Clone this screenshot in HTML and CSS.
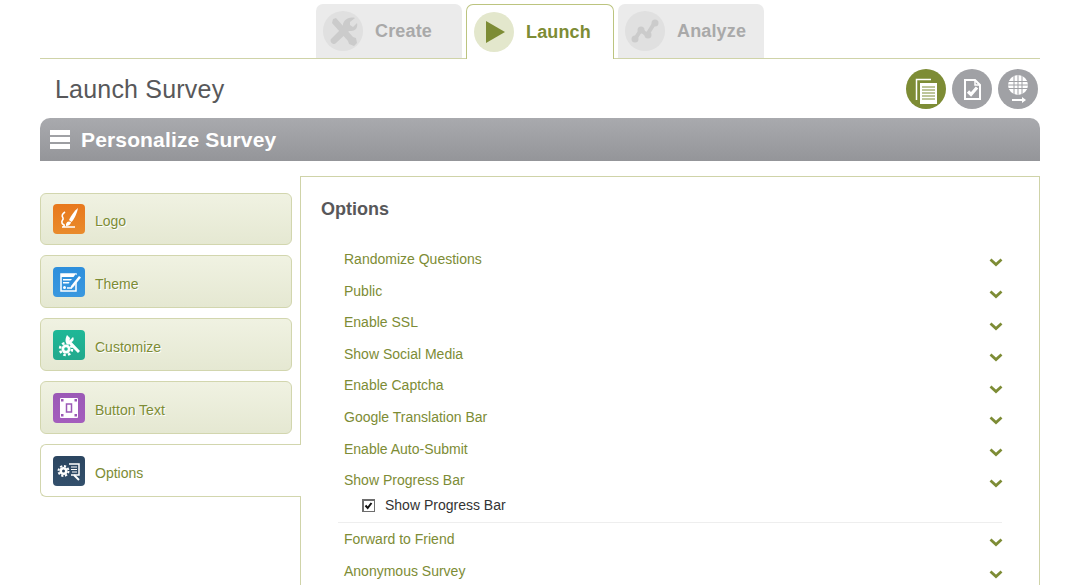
FILE: index.html
```html
<!DOCTYPE html>
<html lang="en">
<head>
<meta charset="utf-8">
<title>Launch Survey</title>
<link rel="stylesheet" href="styles.css">
</head>
<body>
<div class="page">
  <nav class="tabs">
    <div class="tab">
      <span class="tab-icon">
        <svg viewBox="0 0 40 40" width="40" height="40"><g fill="#cbcbcb"><path d="M10 8l3-1 17 19 3 1 1 5-3 3-5-2-1-3L9 12z"/><path d="M32 7l-5 4 0 3 3 2 4-4c1 4-1 8-6 8l-2 0L13 32c-2 3-7-1-5-4l12-12c-1-6 5-11 12-9z"/></g></svg>
      </span>
      <span class="tab-label">Create</span>
    </div>
    <div class="tab tab-active">
      <span class="tab-icon">
        <svg viewBox="0 0 40 40" width="40" height="40"><path d="M12 9v22l19-11z" fill="#7d8c35"/></svg>
      </span>
      <span class="tab-label">Launch</span>
    </div>
    <div class="tab">
      <span class="tab-icon">
        <svg viewBox="0 0 40 40" width="40" height="40"><path d="M10 28l6-9 6 5 8-13" fill="none" stroke="#cbcbcb" stroke-width="4"/><g fill="#cbcbcb"><circle cx="10" cy="28" r="3.500"/><circle cx="16" cy="19" r="3.500"/><circle cx="23" cy="24" r="3.500"/><circle cx="30" cy="12" r="3.500"/></g></svg>
      </span>
      <span class="tab-label">Analyze</span>
    </div>
  </nav>

  <header class="page-head">
    <h1 class="page-title">Launch Survey</h1>
    <div class="head-actions">
      <span class="round round-on">
        <svg viewBox="0 0 40 40" width="40" height="40"><path d="M10.500 31V10.500H25" fill="none" stroke="#fff" stroke-width="1.500"/><path d="M14 14h17v21H14z" fill="#fff"/><path d="M16 18h13M16 21h13M16 24h13M16 27h13M16 30h13" stroke="#7d8c35" stroke-width="1"/></svg>
      </span>
      <span class="round">
        <svg viewBox="0 0 40 40" width="40" height="40"><path d="M13 11h10l5 5v14H13z" fill="none" stroke="#fff" stroke-width="2"/><path d="M23 11v5h5" fill="none" stroke="#fff" stroke-width="1.500"/><path d="M16 22.500l3 3 6-7" fill="none" stroke="#fff" stroke-width="3.200"/></svg>
      </span>
      <span class="round">
        <svg viewBox="0 0 40 40" width="40" height="40"><circle cx="20" cy="16" r="10" fill="#fff"/><path d="M10 12.500h20M10 16h20M10 19.500h20M16 6v20M20 6v20M24 6v20" stroke="#a0a1a5" stroke-width="1"/><path d="M14 31h11" stroke="#fff" stroke-width="2"/><path d="M24 28l4 3-4 3z" fill="#fff"/></svg>
      </span>
    </div>
  </header>

  <div class="section-bar">
    <span class="bars"><i></i><i></i><i></i></span>
    <h2 class="section-title">Personalize Survey</h2>
  </div>

  <div class="content">
    <aside class="side">
      <a class="side-item">
        <span class="side-icon ic-orange">
          <svg viewBox="0 0 32 30" width="32" height="30"><path d="M25 4c-4 3-7 8-9 12l2.500 2c3-3 5.500-9 6.500-14z" fill="#fff"/><path d="M12 8c-3 2-3.500 4-2 6 1 2-2 2-1 5 .5 2 3 1 2 3-.5 1-2 1-2 1h13" fill="none" stroke="#fff" stroke-width="1.600"/><path d="M13 20c1-3 3-3 5-2 0 2-2 4-5 4z" fill="#fff"/></svg>
        </span>
        <span class="side-label">Logo</span>
      </a>
      <a class="side-item">
        <span class="side-icon ic-blue">
          <svg viewBox="0 0 32 30" width="32" height="30"><rect x="8" y="7" width="15" height="17" fill="none" stroke="#fff" stroke-width="1.500"/><path d="M8 7h15v3H8zM10 12h10v1.500H10zM10 15h8v1.500H10z" fill="#fff"/><circle cx="11.500" cy="20.500" r="1.500" fill="#fff"/><path d="M14 21h5" stroke="#fff" stroke-width="1.500"/><path d="M25 9l-7 9" stroke="#2e8fdc" stroke-width="6"/><path d="M26 9l-8 10-.5 2.500 2.500-1 8-10z" fill="#fff"/></svg>
        </span>
        <span class="side-label">Theme</span>
      </a>
      <a class="side-item">
        <span class="side-icon ic-teal">
          <svg viewBox="0 0 32 30" width="32" height="30"><path d="M14 5l3 3-.5 2.500L20 7c1.500 2 .5 4.500-1.500 5L27 21l-2 2-9-9c-3 .5-5-3-2-9z" fill="#fff"/><circle cx="13" cy="19" r="6" fill="none" stroke="#fff" stroke-width="2.500" stroke-dasharray="2.500 2.200"/><circle cx="13" cy="19" r="4.500" fill="#fff"/><circle cx="13" cy="19" r="1.800" fill="#1fb897"/></svg>
        </span>
        <span class="side-label">Customize</span>
      </a>
      <a class="side-item">
        <span class="side-icon ic-purple">
          <svg viewBox="0 0 32 30" width="32" height="30"><rect x="7" y="5" width="18" height="20" rx="1" fill="#fff"/><rect x="13.500" y="11" width="5" height="8" fill="none" stroke="#9b59b6" stroke-width="1.500"/><g fill="#9b59b6"><rect x="8" y="6" width="2.500" height="2.500"/><rect x="21.500" y="6" width="2.500" height="2.500"/><rect x="8" y="21" width="2.500" height="2.500"/><rect x="21.500" y="21" width="2.500" height="2.500"/></g></svg>
        </span>
        <span class="side-label">Button Text</span>
      </a>
      <a class="side-item side-active">
        <span class="side-icon ic-navy">
          <svg viewBox="0 0 32 30" width="32" height="30"><circle cx="10.500" cy="15" r="5" fill="none" stroke="#fff" stroke-width="2" stroke-dasharray="2.200 1.700"/><circle cx="10.500" cy="15" r="4" fill="#fff"/><circle cx="10.500" cy="15" r="1.500" fill="#2b4560"/><path d="M16 8h10v11h-8" fill="none" stroke="#fff" stroke-width="1.500"/><path d="M18 11h6M18 13.500h6M19 16h5" stroke="#fff" stroke-width="1"/><path d="M21 19l5 5" stroke="#fff" stroke-width="2"/></svg>
        </span>
        <span class="side-label">Options</span>
      </a>
    </aside>

    <main class="panel">
      <h3 class="panel-title">Options</h3>
      <ul class="opts">
        <li class="opt"><span>Randomize Questions</span><svg class="chev" viewBox="0 0 14 9" width="14" height="9"><path d="M1.500 1.500L7 6.500l5.500-5" fill="none" stroke="#7d8c35" stroke-width="2.800"/></svg></li>
        <li class="opt"><span>Public</span><svg class="chev" viewBox="0 0 14 9" width="14" height="9"><path d="M1.500 1.500L7 6.500l5.500-5" fill="none" stroke="#7d8c35" stroke-width="2.800"/></svg></li>
        <li class="opt"><span>Enable SSL</span><svg class="chev" viewBox="0 0 14 9" width="14" height="9"><path d="M1.500 1.500L7 6.500l5.500-5" fill="none" stroke="#7d8c35" stroke-width="2.800"/></svg></li>
        <li class="opt"><span>Show Social Media</span><svg class="chev" viewBox="0 0 14 9" width="14" height="9"><path d="M1.500 1.500L7 6.500l5.500-5" fill="none" stroke="#7d8c35" stroke-width="2.800"/></svg></li>
        <li class="opt"><span>Enable Captcha</span><svg class="chev" viewBox="0 0 14 9" width="14" height="9"><path d="M1.500 1.500L7 6.500l5.500-5" fill="none" stroke="#7d8c35" stroke-width="2.800"/></svg></li>
        <li class="opt"><span>Google Translation Bar</span><svg class="chev" viewBox="0 0 14 9" width="14" height="9"><path d="M1.500 1.500L7 6.500l5.500-5" fill="none" stroke="#7d8c35" stroke-width="2.800"/></svg></li>
        <li class="opt"><span>Enable Auto-Submit</span><svg class="chev" viewBox="0 0 14 9" width="14" height="9"><path d="M1.500 1.500L7 6.500l5.500-5" fill="none" stroke="#7d8c35" stroke-width="2.800"/></svg></li>
        <li class="opt"><span>Show Progress Bar</span><svg class="chev" viewBox="0 0 14 9" width="14" height="9"><path d="M1.500 1.500L7 6.500l5.500-5" fill="none" stroke="#7d8c35" stroke-width="2.800"/></svg></li>
        <li class="opt-detail">
          <svg class="check" viewBox="0 0 13 13" width="13" height="13"><rect width="13" height="13" fill="#6d6d6d"/><rect x="2" y="2" width="10" height="10" fill="#fff"/><path d="M3.500 6.500l2.200 2.500 3.800-5" fill="none" stroke="#111" stroke-width="2"/></svg>
          <span>Show Progress Bar</span>
        </li>
        <li class="opt"><span>Forward to Friend</span><svg class="chev" viewBox="0 0 14 9" width="14" height="9"><path d="M1.500 1.500L7 6.500l5.500-5" fill="none" stroke="#7d8c35" stroke-width="2.800"/></svg></li>
        <li class="opt"><span>Anonymous Survey</span><svg class="chev" viewBox="0 0 14 9" width="14" height="9"><path d="M1.500 1.500L7 6.500l5.500-5" fill="none" stroke="#7d8c35" stroke-width="2.800"/></svg></li>
      </ul>
    </main>
  </div>
</div>
</body>
</html>
```
FILE: styles.css
```css
* { box-sizing: border-box; }
html, body { margin: 0; padding: 0; height: 585px; overflow: hidden; background: #fff; }
body { font-family: "Liberation Sans", Arial, sans-serif; }
.page { width: 1000px; margin-left: 40px; height: 585px; overflow: hidden; }

.tabs {
  display: flex; justify-content: center; gap: 4px;
  height: 59px; padding-top: 4px;
  border-bottom: 1px solid #cfd3a8;
}
.tab {
  width: 146px; height: 54px;
  display: flex; align-items: center; gap: 12px;
  padding: 0 0 0 7px;
  background: #ebebeb; border-radius: 7px 7px 0 0;
}
.tab-icon {
  width: 40px; height: 40px; border-radius: 50%;
  background: #e0e0e0; flex: none; display: block;
}
.tab-icon svg { display: block; }
.tab-label { font-size: 18px; font-weight: bold; color: #a9a9a9; letter-spacing: .15px; }
.tab-active {
  width: 148px; height: 55px; background: #fff;
  border: 1px solid #bcc47f; border-bottom: none;
  padding-left: 7px; margin-bottom: -1px; gap: 12px;
}
.tab-active .tab-icon { background: #e3e7cc; }
.tab-active .tab-label { color: #7d8c35; }

.page-head {
  height: 59px; padding: 10px 2px 0 15px;
  display: flex; justify-content: space-between; align-items: flex-start;
}
.page-title { margin: 3px 0 0; font-size: 25px; font-weight: normal; color: #58585a; line-height: 34px; letter-spacing: .2px; }
.head-actions { display: flex; gap: 6px; }
.round { width: 40px; height: 40px; border-radius: 50%; background: #a0a1a5; display: block; }
.round svg { display: block; }
.round-on { background: #7d8c35; }

.section-bar {
  height: 43px; padding-left: 10px;
  display: flex; align-items: center; gap: 11px;
  background: linear-gradient(#a9aaae, #949599);
  border-radius: 10px 10px 0 0;
}
.bars { display: flex; flex-direction: column; gap: 2px; width: 20px; }
.bars i { display: block; height: 5px; background: #fff; }
.section-title { margin: 0; font-size: 21px; font-weight: bold; color: #fff; letter-spacing: .15px; }

.content { display: flex; margin-top: 15px; }
.side { width: 260px; flex: none; padding-top: 17px; display: flex; flex-direction: column; gap: 10px; position: relative; z-index: 1; }
.side-item {
  width: 252px; height: 53px;
  display: flex; align-items: center; gap: 10px;
  padding-left: 12px;
  border: 1px solid #d2d6ae; border-radius: 6px;
  background: linear-gradient(#f0f2e2, #e5e8d2);
}
.side-item:first-child { height: 52px; }
.side-active {
  width: 261px; background: #fff;
  border-right: none; border-radius: 6px 0 0 6px;
}
.side-icon { width: 32px; height: 30px; border-radius: 4px; flex: none; display: block; }
.side-icon svg { display: block; }
.ic-orange { background: linear-gradient(#e8781c, #e98b2c); }
.ic-blue { background: linear-gradient(#2e8fdc, #3a98df); }
.ic-teal { background: linear-gradient(#1fb897, #22a98d); }
.ic-purple { background: linear-gradient(#9b59b6, #a45dbd); }
.ic-navy { background: linear-gradient(#2b4560, #33506c); }
.side-label { font-size: 14px; color: #7d8c35; margin-top: 4px; text-shadow: 1px 1px 0 #fff; }

.panel { flex: 1; height: 500px; border: 1px solid #cfd3a8; padding: 21px 37px 0 20px; background: #fff; }
.panel-title { margin: 0 0 29.2px; font-size: 18px; line-height: 22px; font-weight: bold; color: #58585a; }
.opts { list-style: none; margin: 0; padding: 0 0 0 17px; }
.opt {
  height: 31.57px; padding: 0 0 0 6px;
  display: flex; justify-content: space-between; align-items: flex-start;
  font-size: 14px; line-height: 20px; color: #7d8c35;
}
.chev { margin: 9.2px -1px 0 0; }
.opt-detail {
  height: 32px; margin-top: -10.76px; margin-bottom: 6px; padding: 4px 0 0 24px;
  display: flex; align-items: flex-start; gap: 10px;
  font-size: 14px; line-height: 20px; color: #333;
  border-bottom: 1px solid #eee;
}
.check { margin-top: 4px; flex: none; display: block; }
```
